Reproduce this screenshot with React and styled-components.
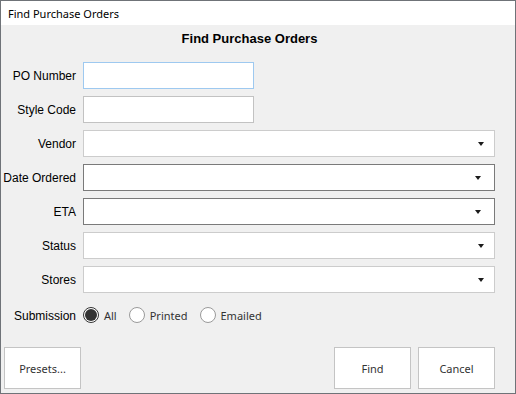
import React from "react";
import styled, { createGlobalStyle } from "styled-components";

const Global = createGlobalStyle`
  html, body { margin: 0; padding: 0; background: #ffffff; }
  * { box-sizing: border-box; }
`;

const Window = styled.div`
  width: 516px;
  height: 394px;
  border: 1px solid #6f7378;
  display: flex;
  flex-direction: column;
  background: #f0f0f0;
  overflow: hidden;
`;

const TitleBar = styled.div`
  height: 24px;
  background: #ffffff;
  display: flex;
  align-items: center;
  padding-left: 7px;
  font-family: "Noto Sans", sans-serif;
  font-size: 11px;
  color: #000;
`;

const Body = styled.div`
  flex: 1;
  display: flex;
  flex-direction: column;
  padding: 6px 20px 4px 0;
`;

const Heading = styled.div`
  font-family: "Liberation Sans", Arial, sans-serif;
  font-weight: bold;
  font-size: 13px;
  line-height: 16px;
  text-align: center;
  padding-left: 3px;
  color: #000;
`;

const Form = styled.div`
  display: grid;
  grid-template-columns: 75px 1fr;
  grid-template-rows: repeat(7, 27px) 30px;
  column-gap: 7px;
  row-gap: 7px;
  margin-top: 15px;
`;

const Label = styled.div`
  font-family: "Liberation Sans", Arial, sans-serif;
  font-size: 12px;
  color: #000;
  text-align: right;
  white-space: nowrap;
  align-self: center;
  margin-top: 1px;
`;

const TextBox = styled.div`
  width: 171px;
  height: 27px;
  background: #fff;
  border: 1px solid ${(p) => (p.$focused ? "#9ec9f0" : "#c2c2c2")};
`;

const Combo = styled.div`
  height: 27px;
  background: #fff;
  border: 1px solid ${(p) => (p.$dark ? "#7a7a7a" : "#cccccc")};
  display: flex;
  align-items: center;
  justify-content: flex-end;
  padding-right: ${(p) => (p.$dark ? "13px" : "10px")};
`;

const Arrow = styled.span`
  width: 0;
  height: 0;
  border-left: 3.5px solid transparent;
  border-right: 3.5px solid transparent;
  border-top: 4px solid #1b1b1b;
`;

const RadioGroup = styled.div`
  display: flex;
  align-items: center;
  gap: 12px;
`;

const RadioItem = styled.label`
  display: flex;
  align-items: center;
  gap: 5px;
  font-family: "Noto Sans", sans-serif;
  font-size: 11px;
  color: #333;
`;

const RadioCircle = styled.span`
  width: 16px;
  height: 16px;
  border-radius: 50%;
  border: 1px solid ${(p) => (p.$checked ? "#333" : "#9a9a9a")};
  background: #fff;
  display: flex;
  align-items: center;
  justify-content: center;
  &::after {
    content: "";
    width: 12px;
    height: 12px;
    border-radius: 50%;
    background: ${(p) => (p.$checked ? "#333" : "transparent")};
  }
`;

const ButtonRow = styled.div`
  margin-top: auto;
  display: flex;
  gap: 7px;
  padding-left: 3px;
`;

const Spacer = styled.div`
  flex: 1;
`;

const Button = styled.div`
  width: 77px;
  height: 42px;
  background: #fff;
  border: 1px solid #c4c4c4;
  display: flex;
  align-items: center;
  justify-content: center;
  font-family: "Noto Sans", sans-serif;
  font-size: 11px;
  color: #333;
`;

const rows = [
  { label: "Vendor", dark: false },
  { label: "Date Ordered", dark: true },
  { label: "ETA", dark: true },
  { label: "Status", dark: false },
  { label: "Stores", dark: false },
];

export default function App() {
  return (
    <>
      <Global />
      <Window>
        <TitleBar>Find Purchase Orders</TitleBar>
        <Body>
          <Heading>Find Purchase Orders</Heading>
          <Form>
            <Label>PO Number</Label>
            <TextBox $focused />
            <Label>Style Code</Label>
            <TextBox />
            {rows.map((r) => (
              <React.Fragment key={r.label}>
                <Label>{r.label}</Label>
                <Combo $dark={r.dark}>
                  <Arrow />
                </Combo>
              </React.Fragment>
            ))}
            <Label>Submission</Label>
            <RadioGroup>
              <RadioItem>
                <RadioCircle $checked />
                All
              </RadioItem>
              <RadioItem>
                <RadioCircle />
                Printed
              </RadioItem>
              <RadioItem>
                <RadioCircle />
                Emailed
              </RadioItem>
            </RadioGroup>
          </Form>
          <ButtonRow>
            <Button>Presets...</Button>
            <Spacer />
            <Button>Find</Button>
            <Button>Cancel</Button>
          </ButtonRow>
        </Body>
      </Window>
    </>
  );
}
